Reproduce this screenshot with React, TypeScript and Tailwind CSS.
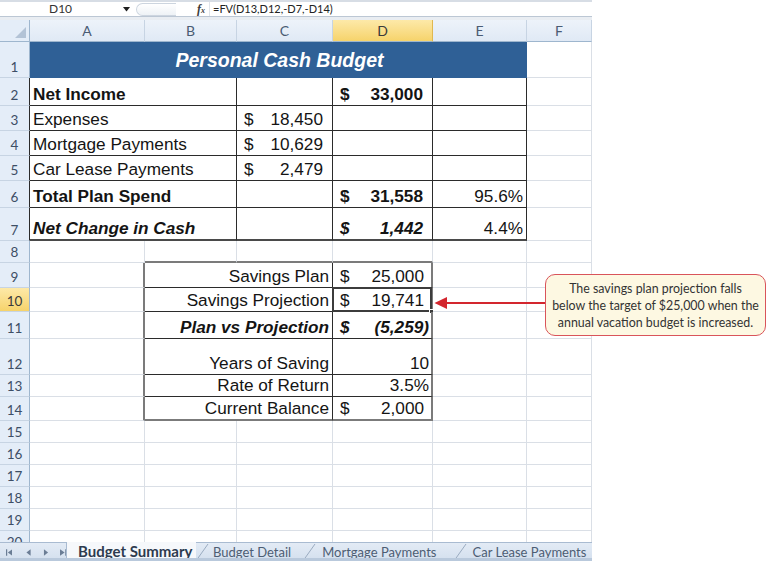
import React from 'react';

type Edge = 'grid' | 'dark' | 'thick' | 'box' | 'none';

const rEdge: Record<Edge, string> = {
  grid: 'border-r border-r-[#dadfe6]',
  dark: 'border-r border-r-[#2b2b2b]',
  thick: 'border-r-2 border-r-[#4a4a4a]',
  box: 'border-r-2 border-r-[#7b7b7b]',
  none: 'border-r-0',
};

const bEdge: Record<Edge, string> = {
  grid: 'border-b border-b-[#dadfe6]',
  dark: 'border-b border-b-[#2b2b2b]',
  thick: 'border-b-2 border-b-[#4a4a4a]',
  box: 'border-b-2 border-b-[#7b7b7b]',
  none: 'border-b-0',
};

const spanCls: Record<number, string> = {
  1: 'col-span-1',
  2: 'col-span-2',
  5: 'col-span-5',
};

const COLS = 'grid grid-cols-[30px_115px_92px_96px_100px_94px_65px]';

function Cell({
  span = 1,
  r = 'grid',
  b = 'grid',
  className = '',
  children,
}: {
  span?: number;
  r?: Edge;
  b?: Edge;
  className?: string;
  children?: React.ReactNode;
}) {
  return (
    <div className={`${spanCls[span]} ${rEdge[r]} ${bEdge[b]} relative flex items-end min-w-0 whitespace-nowrap pb-[1px] ${className}`}>
      {children}
    </div>
  );
}

function RowHead({ n, sel, dark }: { n: number; sel?: boolean; dark?: boolean }) {
  return (
    <div
      className={`flex items-end justify-center pb-[1px] border-b border-b-[#c7d4e3] font-['Lato',sans-serif] text-[13.5px] leading-[18px] ${
        dark ? 'border-r border-r-[#2b2b2b]' : 'border-r border-r-[#9eb6ce]'
      } ${sel ? 'bg-linear-to-b from-[#fde9a8] to-[#f6d36a] text-[#3a3a3a]' : 'bg-[#e4edf8] text-[#3d4e66]'}`}
    >
      {n}
    </div>
  );
}

function Acct({ v, pr = 'pr-[9px]' }: { v: string; pr?: string }) {
  return (
    <div className={`flex w-full justify-between pl-[7px] ${pr}`}>
      <span>$</span>
      <span>{v}</span>
    </div>
  );
}

function FormulaBar() {
  return (
    <div className="flex flex-col h-[20px] shrink-0">
      <div className="h-[2px] bg-[#d7dde5]" />
      <div className="flex items-center h-[15px] bg-white border-b border-b-[#bcc7d4] font-['Lato',sans-serif] text-[11px] text-[#222]">
        <div className="relative w-[136px] h-full flex items-center">
          <span className="pl-[49px] text-[12px] text-[#333]">D10</span>
          <svg className="absolute left-[123px] top-[5px]" width="7" height="5" viewBox="0 0 7 5">
            <path d="M0 0 H7 L3.5 4.5 Z" fill="#1f1f1f" />
          </svg>
        </div>
        <div className="w-[40px] h-[13px] rounded-l-full border border-[#cdd5df] border-r-0 bg-linear-to-b from-white to-[#eef2f6]" />
        <div className="w-[33px] h-full flex items-center justify-end pr-[4px]">
          <span className="font-['Liberation_Serif',serif] italic font-bold text-[12px] text-[#3b3b3b] leading-none">
            f<span className="text-[8px]">x</span>
          </span>
        </div>
        <div className="h-full w-px bg-[#dfe4ea]" />
        <span className="pl-[3px] text-[11px] text-[#222]">=FV(D13,D12,-D7,-D14)</span>
      </div>
      <div className="flex-1 bg-[#e9edf2]" />
    </div>
  );
}

function HeaderRow() {
  const letters = ['A', 'B', 'C', 'D', 'E', 'F'];
  return (
    <div className={`${COLS} h-[22px]`}>
      <div className="relative bg-[#e4edf8] border-r border-r-[#9eb6ce] border-b border-b-[#9eb6ce]">
        <svg className="absolute right-[3px] bottom-[3px]" width="11" height="11" viewBox="0 0 11 11">
          <path d="M11 0 V11 H0 Z" fill="#b3c3d6" />
        </svg>
      </div>
      {letters.map((l) => (
        <div
          key={l}
          className={`flex items-center justify-center border-b border-b-[#9eb6ce] border-r font-['Lato',sans-serif] text-[14px] ${
            l === 'D'
              ? 'bg-linear-to-b from-[#fde9a8] to-[#f6d36a] text-[#3a3a3a] border-r-[#e0b850]'
              : 'bg-linear-to-b from-[#edf3fa] to-[#e0e9f5] text-[#4a5b73] border-r-[#c7d4e3]'
          }`}
        >
          {l}
        </div>
      ))}
    </div>
  );
}

function Sheet() {
  const tail = [15, 16, 17, 18, 19, 20];
  return (
    <div className="h-[522px] overflow-hidden text-[17.2px] leading-[20px] text-[#141414] font-['Liberation_Sans',Arial,sans-serif]">
      <HeaderRow />

      <div className={`${COLS} h-[36px]`}>
        <RowHead n={1} />
        <Cell span={5} r="none" b="none" className="bg-[#2f6096] !items-center justify-center !pb-0">
          <span className="text-white font-bold italic text-[19.5px] pl-[2px]">Personal Cash Budget</span>
        </Cell>
        <Cell />
      </div>

      <div className={`${COLS} h-[28px]`}>
        <RowHead n={2} dark />
        <Cell span={2} r="dark" b="dark" className="pl-[3px] font-bold">Net Income</Cell>
        <Cell r="dark" b="dark" />
        <Cell r="dark" b="dark" className="font-bold"><Acct v="33,000" /></Cell>
        <Cell r="dark" b="dark" />
        <Cell />
      </div>

      <div className={`${COLS} h-[25px]`}>
        <RowHead n={3} dark />
        <Cell span={2} r="dark" b="dark" className="pl-[3px]">Expenses</Cell>
        <Cell r="dark" b="dark"><Acct v="18,450" /></Cell>
        <Cell r="dark" b="dark" />
        <Cell r="dark" b="dark" />
        <Cell />
      </div>

      <div className={`${COLS} h-[25px]`}>
        <RowHead n={4} dark />
        <Cell span={2} r="dark" b="dark" className="pl-[3px]">Mortgage Payments</Cell>
        <Cell r="dark" b="dark"><Acct v="10,629" /></Cell>
        <Cell r="dark" b="dark" />
        <Cell r="dark" b="dark" />
        <Cell />
      </div>

      <div className={`${COLS} h-[25px]`}>
        <RowHead n={5} dark />
        <Cell span={2} r="dark" b="dark" className="pl-[3px]">Car Lease Payments</Cell>
        <Cell r="dark" b="dark"><Acct v="2,479" /></Cell>
        <Cell r="dark" b="dark" />
        <Cell r="dark" b="dark" />
        <Cell />
      </div>

      <div className={`${COLS} h-[27px]`}>
        <RowHead n={6} dark />
        <Cell span={2} r="dark" b="dark" className="pl-[3px] font-bold">Total Plan Spend</Cell>
        <Cell r="dark" b="dark" />
        <Cell r="dark" b="dark" className="font-bold"><Acct v="31,558" /></Cell>
        <Cell r="dark" b="dark" className="justify-end pr-[3px]">95.6%</Cell>
        <Cell />
      </div>

      <div className={`${COLS} h-[33px]`}>
        <RowHead n={7} dark />
        <Cell span={2} r="dark" b="thick" className="pl-[3px] font-bold italic">Net Change in Cash</Cell>
        <Cell r="dark" b="thick" />
        <Cell r="dark" b="thick" className="font-bold italic"><Acct v="1,442" /></Cell>
        <Cell r="dark" b="thick" className="justify-end pr-[3px]">4.4%</Cell>
        <Cell />
      </div>

      <div className={`${COLS} h-[22px]`}>
        <RowHead n={8} />
        <Cell />
        <Cell b="box" />
        <Cell b="box" />
        <Cell b="box" />
        <Cell />
        <Cell />
      </div>

      <div className={`${COLS} h-[25px]`}>
        <RowHead n={9} />
        <Cell r="box" />
        <Cell span={2} r="dark" b="dark" className="justify-end pr-[3px]">Savings Plan</Cell>
        <Cell r="box" b="dark"><Acct v="25,000" pr="pr-[7px]" /></Cell>
        <Cell />
        <Cell />
      </div>

      <div className={`${COLS} h-[24px]`}>
        <RowHead n={10} sel />
        <Cell r="box" />
        <Cell span={2} r="dark" b="dark" className="justify-end pr-[3px]">Savings Projection</Cell>
        <Cell r="box" b="dark">
          <Acct v="19,741" pr="pr-[7px]" />
          <div className="absolute -left-[1px] -top-[1px] -right-[1px] -bottom-[1px] border-2 border-[#3c3c3c]" />
          <div className="absolute -right-[3px] -bottom-[3px] w-[5px] h-[5px] bg-[#3c3c3c] border border-white" />
        </Cell>
        <Cell />
        <Cell />
      </div>

      <div className={`${COLS} h-[27px]`}>
        <RowHead n={11} />
        <Cell r="box" />
        <Cell span={2} r="dark" b="dark" className="justify-end pr-[3px] font-bold italic">Plan vs Projection</Cell>
        <Cell r="box" b="dark" className="font-bold italic"><Acct v="(5,259)" pr="pr-[2px]" /></Cell>
        <Cell />
        <Cell />
      </div>

      <div className={`${COLS} h-[36px]`}>
        <RowHead n={12} />
        <Cell r="box" />
        <Cell span={2} r="dark" b="dark" className="justify-end pr-[3px]">Years of Saving</Cell>
        <Cell r="box" b="dark" className="justify-end pr-[2px]">10</Cell>
        <Cell />
        <Cell />
      </div>

      <div className={`${COLS} h-[22px]`}>
        <RowHead n={13} />
        <Cell r="box" />
        <Cell span={2} r="dark" b="dark" className="justify-end pr-[3px]">Rate of Return</Cell>
        <Cell r="box" b="dark" className="justify-end pr-[2px]">3.5%</Cell>
        <Cell />
        <Cell />
      </div>

      <div className={`${COLS} h-[24px]`}>
        <RowHead n={14} />
        <Cell r="box" />
        <Cell span={2} r="dark" b="box" className="justify-end pr-[3px]">Current Balance</Cell>
        <Cell r="box" b="box"><Acct v="2,000" pr="pr-[7px]" /></Cell>
        <Cell />
        <Cell />
      </div>

      {tail.map((n) => (
        <div key={n} className={`${COLS} h-[22px]`}>
          <RowHead n={n} />
          <Cell />
          <Cell />
          <Cell />
          <Cell />
          <Cell />
          <Cell />
        </div>
      ))}
    </div>
  );
}

function Slant() {
  return (
    <svg width="14" height="17" viewBox="0 0 14 17" className="shrink-0">
      <path d="M1 16.5 L12 1" stroke="#9aabc0" strokeWidth="1" fill="none" />
    </svg>
  );
}

function Tabs() {
  return (
    <div className="relative flex items-stretch h-[19px] shrink-0 bg-linear-to-b from-[#e3ebf5] to-[#d3dfee] border-t border-t-[#a9bbd1] font-['Lato',sans-serif]">
      <div className="flex items-center w-[66px] pl-[6px] gap-[9px] text-[#6b7d95]">
        <svg width="7" height="7" viewBox="0 0 7 7"><path d="M0 0 H1.3 V7 H0 Z M7 0 V7 L2 3.5 Z" fill="currentColor" /></svg>
        <svg width="6" height="7" viewBox="0 0 6 7" className="ml-[5px]"><path d="M5 0 V7 L0.5 3.5 Z" fill="currentColor" /></svg>
        <svg width="6" height="7" viewBox="0 0 6 7" className="ml-[2px]"><path d="M1 0 V7 L5.5 3.5 Z" fill="currentColor" /></svg>
        <svg width="7" height="7" viewBox="0 0 7 7" className="ml-[2px]"><path d="M0 0 V7 L5 3.5 Z M5.7 0 H7 V7 H5.7 Z" fill="currentColor" /></svg>
      </div>
      <div className="flex items-center -mt-px w-[130px] pl-[11px] bg-[#f6f8fb] border-l border-l-[#a9bbd1] text-[15px] font-bold text-[#2d3b4f] leading-none">
        Budget Summary
      </div>
      <Slant />
      <div className="flex items-center pl-[3px] pr-[12px] text-[13px] text-[#4d5d73] leading-none">Budget Detail</div>
      <Slant />
      <div className="flex items-center pl-[5px] pr-[17px] text-[13px] text-[#4d5d73] leading-none">Mortgage Payments</div>
      <Slant />
      <div className="flex items-center pl-[5px] text-[13px] text-[#4d5d73] leading-none whitespace-nowrap">Car Lease Payments</div>
      <div className="absolute left-0 right-0 bottom-0 h-[3px] bg-[#b9c9dc]" />
    </div>
  );
}

function Callout() {
  return (
    <>
      <svg className="absolute left-[434px] top-[296px]" width="113" height="14" viewBox="0 0 113 14">
        <path d="M12 7 H112" stroke="#d3262e" strokeWidth="2" />
        <path d="M0.5 7 L13 1 L13 13 Z" fill="#d3262e" />
      </svg>
      <div className="absolute left-[545px] top-[274px] w-[221px] h-[62px] rounded-[10px] border-[1.5px] border-[#d9545a] bg-[#fdf8e2] flex items-center justify-center">
        <p className="text-center font-['Lato',sans-serif] text-[12.4px] leading-[17px] text-[#333]">
          The savings plan projection falls
          <br />
          below the target of $25,000 when the
          <br />
          annual vacation budget is increased.
        </p>
      </div>
    </>
  );
}

export default function App() {
  return (
    <div className="relative w-[768px] h-[561px] overflow-hidden bg-white">
      <div className="flex flex-col w-[592px] h-full">
        <FormulaBar />
        <Sheet />
        <Tabs />
      </div>
      <Callout />
    </div>
  );
}
